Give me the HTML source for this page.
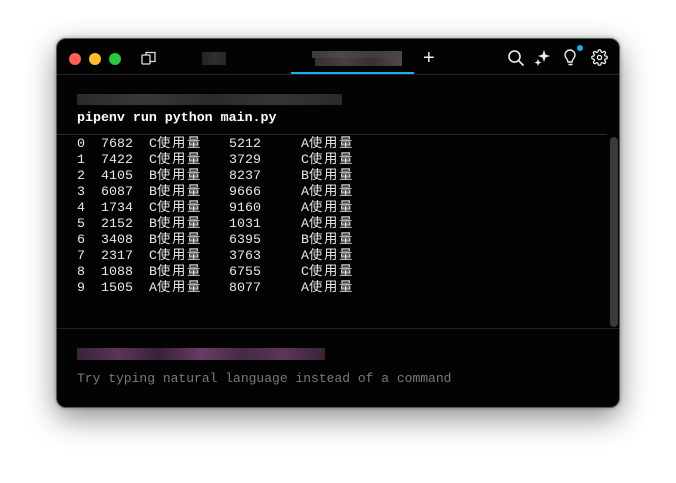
<!DOCTYPE html>
<html><head><meta charset="utf-8"><style>
*{margin:0;padding:0;box-sizing:border-box}
body{width:676px;height:483px;background:#fff;position:relative;overflow:hidden;font-family:"Liberation Mono","Noto Sans CJK SC",monospace}
.win{position:absolute;left:56px;top:38px;width:564px;height:370px;background:#030303;border-radius:10px;border:1px solid #5a5a5a;box-shadow:0 10px 30px rgba(0,0,0,.45),0 0 4px rgba(0,0,0,.3);overflow:hidden}
.dot{position:absolute;top:14px;width:12px;height:12px;border-radius:50%}
.a{position:absolute}
.row{position:absolute;left:20px;font-size:13.3px;color:#e8e8e8;height:16px;line-height:16px;white-space:pre}
.row span{position:absolute;top:0}
</style></head><body>
<div class="win">
 <div class="dot" style="left:12px;background:#fe5f57"></div>
 <div class="dot" style="left:32px;background:#febc2e"></div>
 <div class="dot" style="left:52px;background:#28c840"></div>
 <svg class="a" style="left:84px;top:12px" width="16" height="14" viewBox="0 0 16 14" fill="none" stroke="#ddd" stroke-width="1.3"><rect x="1" y="4" width="8" height="9" rx="1"/><path d="M5 4V1.5h9v9h-5"/></svg>
 <div class="a" style="left:145px;top:13px;width:24px;height:13px;background:linear-gradient(90deg,#222,#303030,#262626)"></div>
 <div class="a" style="left:255px;top:12px;width:90px;height:7px;background:linear-gradient(90deg,#3a3a3a,#4a4a4a,#3d3d3d,#4a4a4a)"></div>
 <div class="a" style="left:258px;top:19px;width:87px;height:8px;background:linear-gradient(90deg,#3a2f2f,#4a3d3d,#3a3030,#564848)"></div>
 <div class="a" style="left:234px;top:33px;width:123px;height:2px;background:#1ab0ec"></div>
 <div class="a" style="left:366px;top:8px;color:#eee;font:300 20px 'Liberation Sans',sans-serif">+</div>
 <svg class="a" style="left:450px;top:10px" width="18" height="18" viewBox="0 0 18 18" fill="none" stroke="#eee" stroke-width="1.6"><circle cx="7.5" cy="7.5" r="5.5"/><path d="M11.5 11.5l5 5"/></svg>
 <svg class="a" style="left:477px;top:10px" width="18" height="18" viewBox="0 0 18 18" fill="#eee"><path d="M10 1l1.5 4.5L16 7l-4.5 1.5L10 13l-1.5-4.5L4 7l4.5-1.5z"/><path d="M4 10l1 2.5L7.5 13.5 5 14.5 4 17 3 14.5 .5 13.5 3 12.5z"/></svg>
 <svg class="a" style="left:506px;top:10px" width="16" height="18" viewBox="0 0 16 18" fill="none" stroke="#eee" stroke-width="1.4"><path d="M5 13c0-3-3-4-3-7a5 5 0 0110 0c0 3-3 4-3 7z"/><path d="M5.5 15.5h4"/></svg>
 <div class="a" style="left:520px;top:6px;width:6px;height:6px;border-radius:50%;background:#1ab0ec"></div>
 <svg class="a" style="left:534px;top:10px" width="17" height="17" viewBox="0 0 24 24" fill="none" stroke="#eee" stroke-width="1.8"><circle cx="12" cy="12" r="3"/><path d="M19.4 15a1.7 1.7 0 00.3 1.8l.1.1a2 2 0 11-2.8 2.8l-.1-.1a1.7 1.7 0 00-1.8-.3 1.7 1.7 0 00-1 1.5V21a2 2 0 11-4 0v-.1a1.7 1.7 0 00-1.1-1.5 1.7 1.7 0 00-1.8.3l-.1.1a2 2 0 11-2.8-2.8l.1-.1a1.7 1.7 0 00.3-1.8 1.7 1.7 0 00-1.5-1H3a2 2 0 110-4h.1a1.7 1.7 0 001.5-1.1 1.7 1.7 0 00-.3-1.8l-.1-.1a2 2 0 112.8-2.8l.1.1a1.7 1.7 0 001.8.3H9a1.7 1.7 0 001-1.5V3a2 2 0 114 0v.1a1.7 1.7 0 001 1.5 1.7 1.7 0 001.8-.3l.1-.1a2 2 0 112.8 2.8l-.1.1a1.7 1.7 0 00-.3 1.8V9a1.7 1.7 0 001.5 1H21a2 2 0 110 4h-.1a1.7 1.7 0 00-1.5 1z"/></svg>
 <div class="a" style="left:0;top:35px;width:564px;height:1px;background:#262626"></div>
 <div class="a" style="left:20px;top:55px;width:265px;height:11px;background:linear-gradient(90deg,#2a2a2a,#383838,#2a2a2a,#353535,#2a2a2a)"></div>
 <div class="row" style="top:71px;font-weight:bold;color:#fff">pipenv run python main.py</div>
 <div class="a" style="left:0;top:95px;width:550px;height:1px;background:#2a2a2a"></div>
 <div id="rows"></div>
 <div class="a" style="left:553px;top:98px;width:8px;height:190px;border-radius:4px;background:#3a3a3a"></div>
 <div class="a" style="left:0;top:289px;width:564px;height:1px;background:#222"></div>
 <div class="a" style="left:20px;top:309px;width:248px;height:12px;background:linear-gradient(90deg,#3a2238,#5c3558,#3a2238,#6a3a66,#452a42,#5c3558,#3a2238)"></div>
 <div class="row" style="top:332px;color:#7a7a7a;font-size:13px">Try typing natural language instead of a command</div>
</div>
<script>
var d=[[0,7682,'C',5212,'A'],[1,7422,'C',3729,'C'],[2,4105,'B',8237,'B'],[3,6087,'B',9666,'A'],[4,1734,'C',9160,'A'],[5,2152,'B',1031,'A'],[6,3408,'B',6395,'B'],[7,2317,'C',3763,'A'],[8,1088,'B',6755,'C'],[9,1505,'A',8077,'A']];
var h='';d.forEach(function(r,i){var t=97+i*16;
function cj(x,l){return '<span style="left:'+x+'px">'+l+'</span><span style="left:'+(x+8)+'px">使</span><span style="left:'+(x+23)+'px">用</span><span style="left:'+(x+38)+'px">量</span>';}
h+='<div class="row" style="top:'+t+'px"><span style="left:0">'+r[0]+'</span><span style="left:24px">'+r[1]+'</span>'+cj(72,r[2])+'<span style="left:152px">'+r[3]+'</span>'+cj(224,r[4])+'</div>';});
document.getElementById('rows').innerHTML=h;
</script>
</body></html>
